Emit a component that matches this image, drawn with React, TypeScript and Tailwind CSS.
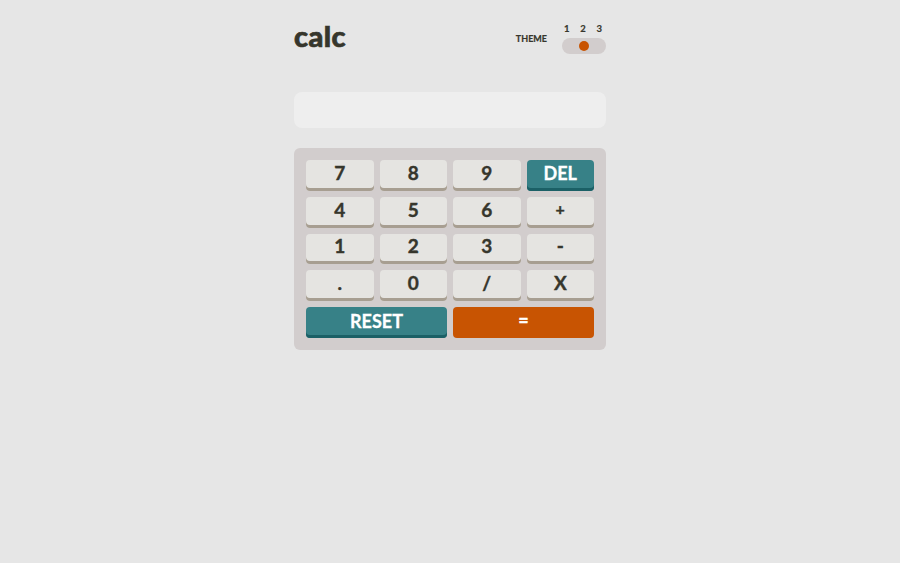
const keys = ['7', '8', '9', 'DEL', '4', '5', '6', '+', '1', '2', '3', '-', '.', '0', '/', 'X'];

function Key({ label }: { label: string }) {
  const isDel = label === 'DEL';
  return (
    <button
      type="button"
      className={
        isDel
          ? 'rounded-[4px] bg-[#378187] text-white text-[18px] font-bold leading-none shadow-[inset_0_-3px_0_#1b6066] pb-[5px] [-webkit-text-stroke:0.3px]'
          : label === '+'
            ? 'rounded-[4px] bg-[#e5e4e1] text-[#36362c] text-[16px] font-bold leading-none shadow-[inset_0_-3px_0_#a79e91] pb-[6px] [-webkit-text-stroke:0.4px]'
            : 'rounded-[4px] bg-[#e5e4e1] text-[#36362c] text-[19px] font-bold leading-none shadow-[inset_0_-3px_0_#a79e91] pb-[6px] [-webkit-text-stroke:0.4px]'
      }
    >
      {label}
    </button>
  );
}

export default function App() {
  return (
    <div className="min-h-[563px] bg-[#e6e6e6] font-['Lato','Open_Sans',sans-serif] text-[#36362c]">
      <div className="mx-auto w-[312px] pt-[23px]">
        <header className="flex h-[31px] items-end justify-between">
          <h1 className="text-[29px] font-black leading-[29px] tracking-[0.4px] mb-[4px] [-webkit-text-stroke:0.7px]">calc</h1>
          <div className="flex items-end">
            <span className="text-[9px] font-bold leading-none mr-[15px] mb-[11px] [-webkit-text-stroke:0.2px]">THEME</span>
            <div className="w-[44px]">
              <div className="flex justify-between pl-[2px] pr-[4px] text-[9.5px] font-bold leading-none mb-[5px] [-webkit-text-stroke:0.2px]">
                <span>1</span>
                <span>2</span>
                <span>3</span>
              </div>
              <div className="flex h-[16px] items-center justify-center rounded-full bg-[#d2cdcd]">
                <span className="h-[10px] w-[10px] rounded-full bg-[#c85402]" />
              </div>
            </div>
          </div>
        </header>

        <div className="mt-[38px] h-[36px] rounded-[8px] bg-[#eeeeee]" />

        <div className="mt-[20px] rounded-[6px] bg-[#d2cdcd] p-[12px]">
          <div className="grid h-[178px] grid-cols-4 grid-rows-5 gap-[6px]">
            {keys.map((k) => (
              <Key key={k} label={k} />
            ))}
            <button
              type="button"
              className="col-span-2 rounded-[4px] bg-[#378187] text-white text-[18px] font-bold leading-none shadow-[inset_0_-3px_0_#1b6066] pb-[4px] [-webkit-text-stroke:0.3px]"
            >
              RESET
            </button>
            <button
              type="button"
              className="col-span-2 rounded-[4px] bg-[#c85402] text-white text-[18px] font-bold leading-none pb-[5px] [-webkit-text-stroke:0.3px]"
            >
              =
            </button>
          </div>
        </div>
      </div>
    </div>
  );
}
